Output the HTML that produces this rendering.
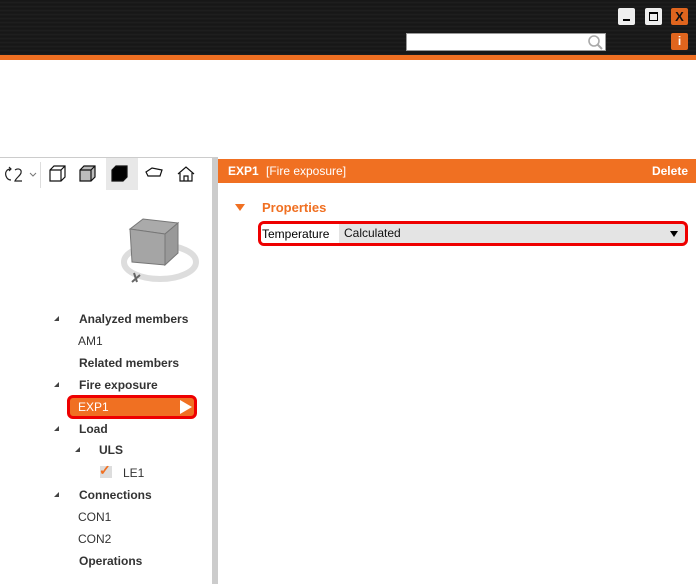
<!DOCTYPE html>
<html><head><style>
*{margin:0;padding:0;box-sizing:border-box}
body{width:696px;height:584px;position:relative;background:#fff;font-family:"Liberation Sans",sans-serif;font-size:12px;overflow:hidden;color:#333}
.a{position:absolute}
.hdr{left:0;top:0;width:696px;height:55px;background:repeating-linear-gradient(180deg,#0c0c0c 0,#222 1px,#111 2px,#2b2b2b 3px,#0a0a0a 4px);}
.tri{position:absolute;width:0;height:0;border-left:5px solid transparent;border-bottom:5px solid #444}
.it{position:absolute;line-height:14px}
.b{font-weight:bold;color:#333}
</style></head><body>
<div class="a hdr"></div>
<div class="a" style="left:0;top:55px;width:696px;height:5px;background:#f07022"></div>
<div class="a" style="left:618px;top:8px;width:17px;height:17px;background:#eee;border-radius:2px"><div class="a" style="left:5px;top:11px;width:7px;height:2px;background:#000"></div></div>
<div class="a" style="left:645px;top:8px;width:17px;height:17px;background:#eee;border-radius:2px"><div class="a" style="left:4px;top:4px;width:9px;height:9px;border:1.5px solid #000;border-top-width:2.5px"></div></div>
<div class="a" style="left:671px;top:8px;width:17px;height:17px;background:#e0651e;border-radius:2px;color:#111;font-weight:bold;font-size:13px;text-align:center;line-height:17px">X</div>
<div class="a" style="left:671px;top:33px;width:17px;height:17px;background:#e0651e;border-radius:2px;color:#fff;font-weight:bold;font-size:12px;text-align:center;line-height:17px">i</div>
<div class="a" style="left:406px;top:33px;width:200px;height:18px;background:#fff;border:1px solid #999"></div>
<svg class="a" style="left:586px;top:34px" width="20" height="17"><circle cx="8" cy="7" r="5" fill="none" stroke="#aaa" stroke-width="1.6"/><line x1="11.5" y1="10.5" x2="16" y2="15" stroke="#aaa" stroke-width="2"/></svg>

<div class="a" style="left:0;top:157px;width:212px;height:1px;background:#ccc"></div>
<div class="a" style="left:212px;top:157px;width:6px;height:427px;background:#ccc"></div>
<div class="a" style="left:106px;top:158px;width:32px;height:32px;background:#e8e8e8"></div>
<svg class="a" style="left:3px;top:166px" width="36" height="18">
<g fill="none" stroke="#222" stroke-width="1.2">
<path d="M8 3 C3 3 2 7 3 10 C4 13 6 14 8 14"/><path d="M6 1 L8 3 L6 5"/>
<path d="M12 4 C15 2 19 3 18 7 C17 10 13 12 12 15 L19 15"/>
<path d="M27 7 L30 10 L33 7" stroke="#777" stroke-width="1"/>
</g></svg>
<div class="a" style="left:40px;top:162px;width:1px;height:26px;background:#ddd"></div>
<svg class="a" style="left:48px;top:164px" width="150" height="20">
<g fill="none" stroke="#111" stroke-width="1.2">
<path d="M2 6 L6 2 L17 2 L17 13 L13 17 L2 17Z M2 6 L13 6 L13 17 M13 6 L17 2"/>
<path d="M32 6 L36 2 L47 2 L47 13 L43 17 L32 17Z M32 6 L43 6 L43 17 M43 6 L47 2" fill="#bbb"/>
<path d="M64 6 L68 2 L79 2 L79 13 L75 17 L64 17Z" fill="#000"/>
<path d="M98 8 L104 4 L114 6 L112 12 L100 12Z M100 12 L98 8"/>
<path d="M130 10 L138 3 L146 10 M132 9 L132 17 L144 17 L144 9 M136 17 L136 12 L140 12 L140 17"/>
</g></svg>
<svg class="a" style="left:112px;top:215px" width="95" height="75">
<ellipse cx="48" cy="47" rx="36" ry="17" fill="none" stroke="#ddd" stroke-width="6"/>
<path d="M18 14 L31 4 L66 8 L53 19Z" fill="#aaa" stroke="#777"/>
<path d="M53 19 L66 8 L66 38 L53 50Z" fill="#999" stroke="#777"/>
<path d="M18 14 L53 19 L53 50 L20 47Z" fill="#a5a5a5" stroke="#777"/>
<path d="M20 67 L28 60 M22 58 L25 67" stroke="#666" stroke-width="2"/>
</svg>

<div class="tri" style="left:54px;top:316px"></div>
<div class="it b" style="left:79px;top:312px">Analyzed members</div>
<div class="it" style="left:78px;top:334px">AM1</div>
<div class="it b" style="left:79px;top:356px">Related members</div>
<div class="tri" style="left:54px;top:382px"></div>
<div class="it b" style="left:79px;top:378px">Fire exposure</div>
<div class="a" style="left:67px;top:395px;width:130px;height:24px;border:3px solid #e00;border-radius:6px;background:#f07022"></div>
<div class="a" style="left:180px;top:400px;width:0;height:0;border-top:7px solid transparent;border-bottom:7px solid transparent;border-left:12px solid #fff"></div>
<div class="it" style="left:78px;top:400px;color:#fff">EXP1</div>
<div class="tri" style="left:54px;top:426px"></div>
<div class="it b" style="left:79px;top:422px">Load</div>
<div class="tri" style="left:75px;top:447px"></div>
<div class="it b" style="left:99px;top:443px">ULS</div>
<div class="a" style="left:100px;top:466px;width:12px;height:12px;background:#ddd"></div>
<div class="a" style="left:99px;top:462px;color:#f07022;font-size:14px;font-weight:bold">&#x2713;</div>
<div class="it" style="left:123px;top:466px">LE1</div>
<div class="tri" style="left:54px;top:492px"></div>
<div class="it b" style="left:79px;top:488px">Connections</div>
<div class="it" style="left:78px;top:510px">CON1</div>
<div class="it" style="left:78px;top:532px">CON2</div>
<div class="it b" style="left:79px;top:554px">Operations</div>

<div class="a" style="left:218px;top:159px;width:478px;height:24px;background:#f07022;color:#fff;line-height:24px">
<span style="position:absolute;left:10px;font-weight:bold">EXP1</span><span style="position:absolute;left:48px">[Fire exposure]</span><span style="position:absolute;right:8px;font-weight:bold">Delete</span></div>
<div class="a" style="left:235px;top:204px;width:0;height:0;border-left:5px solid transparent;border-right:5px solid transparent;border-top:7px solid #f07022"></div>
<div class="a" style="left:262px;top:200px;color:#f07022;font-weight:bold;font-size:13px">Properties</div>
<div class="a" style="left:258px;top:221px;width:430px;height:25px;border:3px solid #e00;border-radius:6px;background:#e4e4e4;overflow:hidden">
<div class="a" style="left:0;top:0;width:78px;height:19px;background:#fff;color:#000;line-height:21px;padding-left:1px">Temperature</div>
<div class="a" style="left:83px;top:0;line-height:19px;color:#111">Calculated</div>
<div class="a" style="right:7px;top:7px;width:0;height:0;border-left:4px solid transparent;border-right:4px solid transparent;border-top:6px solid #000"></div>
</div>
</body></html>
